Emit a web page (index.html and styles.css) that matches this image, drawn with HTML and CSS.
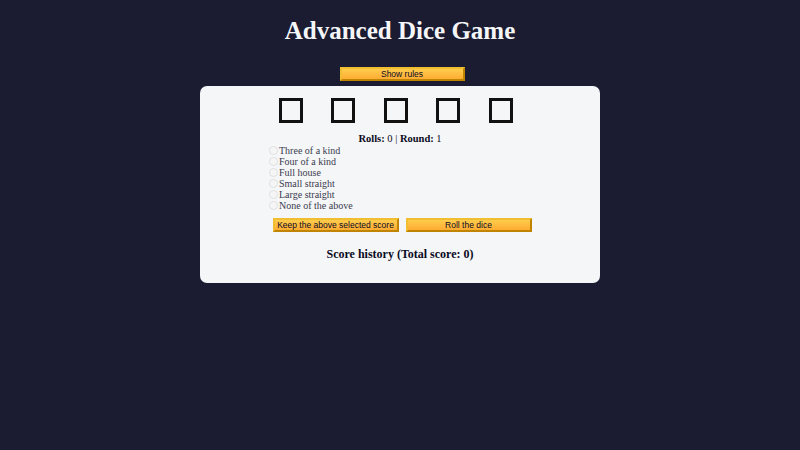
FILE: index.html
```html
<!DOCTYPE html>
<html lang="en">
<head>
  <meta charset="UTF-8">
  <title>Advanced Dice Game</title>
  <link rel="stylesheet" href="styles.css">
</head>
<body>
  <header>
    <h1>Advanced Dice Game</h1>
  </header>

  <main>
    <button class="btn rules-btn" id="rules-btn">Show rules</button>

    <div class="dice-game">
      <div class="dice">
        <div class="die"></div>
        <div class="die"></div>
        <div class="die"></div>
        <div class="die"></div>
        <div class="die"></div>
      </div>

      <p class="rounds-text">
        <strong>Rolls:</strong> <span id="current-round-rolls">0</span> |
        <strong>Round:</strong> <span id="current-round">1</span>
      </p>

      <form class="score-options">
        <label><input type="radio" name="score-options" disabled> Three of a kind</label>
        <label><input type="radio" name="score-options" disabled> Four of a kind</label>
        <label><input type="radio" name="score-options" disabled> Full house</label>
        <label><input type="radio" name="score-options" disabled> Small straight</label>
        <label><input type="radio" name="score-options" disabled> Large straight</label>
        <label><input type="radio" name="score-options" disabled> None of the above</label>
      </form>

      <div class="actions">
        <button class="btn" id="keep-score-btn" disabled>Keep the above selected score</button>
        <button class="btn" id="roll-dice-btn">Roll the dice</button>
      </div>

      <h2 class="score-title">Score history (Total score: <span id="total-score">0</span>)</h2>
    </div>
  </main>
</body>
</html>
```

FILE: styles.css
```css
* {
  box-sizing: border-box;
}
body {
  margin: 0;
  background: #1b1b32;
  color: #0a0a23;
  font-family: "Liberation Serif", serif;
}
header h1 {
  margin: 0;
  padding-top: 15px;
  color: #f5f6f7;
  text-align: center;
  font-size: 25px;
  line-height: 31px;
}
main {
  display: flex;
  flex-direction: column;
  align-items: center;
  padding-top: 21px;
}
.btn {
  background-color: #feac32;
  background-image: linear-gradient(#fecc4c, #ffac33);
  border: 2px solid #feac32;
  border-color: #f1be32 #c08400 #c08400 #f1be32;
  color: #0a0a23;
  font-family: "Liberation Sans", sans-serif;
  font-size: 8.5px;
  line-height: 9px;
  padding: 0;
  white-space: nowrap;
  cursor: pointer;
}
.btn:disabled {
  color: #0a0a23;
}
.rules-btn {
  width: 125px;
  height: 14px;
  margin-left: 4px;
}
.dice-game {
  margin-top: 5px;
  width: 400px;
  background: #f5f6f7;
  border-radius: 7px;
  padding: 12px 0 21px;
  display: flex;
  flex-direction: column;
  align-items: center;
}
.dice {
  display: flex;
  gap: 28.5px;
  margin-right: 9px;
}
.die {
  width: 24px;
  height: 25px;
  border: 3px solid #111;
}
.rounds-text {
  margin: 10px 0 0;
  font-size: 10.5px;
  line-height: 12px;
}
.score-options {
  align-self: flex-start;
  margin-left: 69px;
  display: flex;
  flex-direction: column;
  font-size: 10px;
  color: #3b3b4f;
}
.score-options label {
  display: flex;
  align-items: center;
  height: 11px;
  gap: 1px;
}
.score-options input {
  margin: 0;
  width: 9px;
  height: 9px;
  opacity: 0.5;
}
.actions {
  display: flex;
  gap: 7px;
  margin-top: 7px;
  margin-left: 4px;
}
.actions .btn {
  width: 126px;
  height: 14px;
}
.score-title {
  margin: 14px 0 0;
  font-size: 12px;
  line-height: 16px;
}
```
